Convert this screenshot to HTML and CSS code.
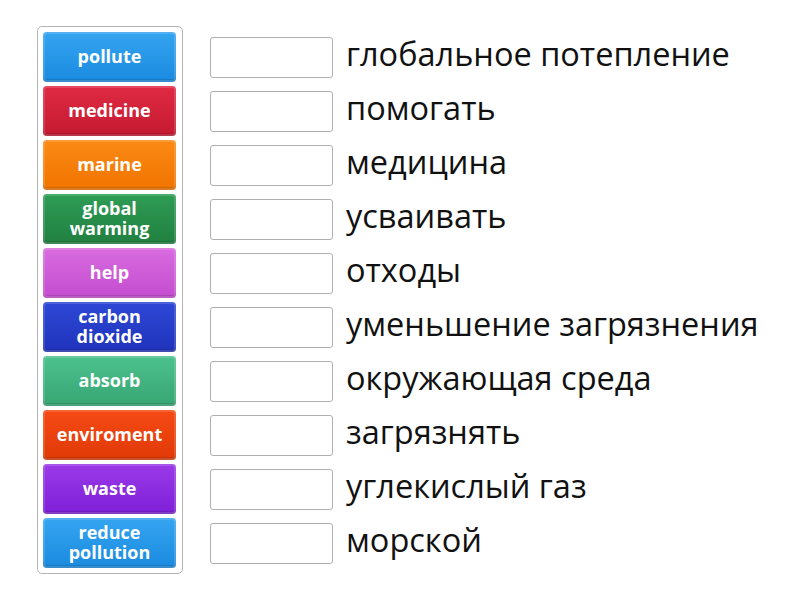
FILE: index.html
```html
<!DOCTYPE html>
<html>
<head>
<meta charset="utf-8">
<link rel="stylesheet" href="styles.css">
</head>
<body>
<div class="page">
  <div class="panel">
    <div class="tile c-blue">pollute</div>
    <div class="tile c-red">medicine</div>
    <div class="tile c-orange">marine</div>
    <div class="tile c-green two">global warming</div>
    <div class="tile c-pink">help</div>
    <div class="tile c-navy two">carbon dioxide</div>
    <div class="tile c-teal">absorb</div>
    <div class="tile c-flame">enviroment</div>
    <div class="tile c-purple">waste</div>
    <div class="tile c-blue two">reduce pollution</div>
  </div>
  <div class="rows">
    <div class="row"><div class="slot"></div><span class="label">глобальное потепление</span></div>
    <div class="row"><div class="slot"></div><span class="label">помогать</span></div>
    <div class="row"><div class="slot"></div><span class="label">медицина</span></div>
    <div class="row"><div class="slot"></div><span class="label">усваивать</span></div>
    <div class="row"><div class="slot"></div><span class="label">отходы</span></div>
    <div class="row"><div class="slot"></div><span class="label">уменьшение загрязнения</span></div>
    <div class="row"><div class="slot"></div><span class="label">окружающая среда</span></div>
    <div class="row"><div class="slot"></div><span class="label">загрязнять</span></div>
    <div class="row"><div class="slot"></div><span class="label">углекислый газ</span></div>
    <div class="row"><div class="slot"></div><span class="label">морской</span></div>
  </div>
</div>
</body>
</html>
```
FILE: styles.css
```css
html, body {
  margin: 0;
  padding: 0;
  background: #fff;
  font-family: "Open Sans", "Noto Sans", sans-serif;
}
.page {
  display: flex;
  align-items: flex-start;
  padding: 26px 0 0 37px;
}
.panel {
  box-sizing: border-box;
  width: 146px;
  border: 1px solid #b4b4b4;
  border-radius: 5px;
  padding: 5px 6px 5px 5px;
  display: flex;
  flex-direction: column;
  gap: 4px;
}
.tile {
  height: 50px;
  box-sizing: border-box;
  border-radius: 4px;
  display: flex;
  align-items: center;
  justify-content: center;
  text-align: center;
  color: #fff;
  font-weight: 700;
  font-size: 18px;
  line-height: 20px;
  padding: 0 6px 2px;
  box-shadow: inset 0 0 0 2px rgba(255,255,255,0.15), inset 0 -3px 0 rgba(0,0,0,0.12);
}
.c-blue { background: linear-gradient(#35a4f0, #1a8ae0); }
.c-red { background: linear-gradient(#e02a44, #c41a30); }
.c-orange { background: linear-gradient(#fb8a14, #f07400); }
.c-green { background: linear-gradient(#2f9d55, #207f40); }
.c-pink { background: linear-gradient(#d86ce0, #c44ccf); }
.c-navy { background: linear-gradient(#2e48d6, #1f33bb); }
.c-teal { background: linear-gradient(#4cc18e, #37a673); }
.c-flame { background: linear-gradient(#f54a14, #e03a08); }
.c-purple { background: linear-gradient(#9a3ae8, #7e1fd8); }
.rows {
  margin-left: 27px;
  padding-top: 6px;
  display: flex;
  flex-direction: column;
  gap: 4px;
}
.row {
  height: 50px;
  display: flex;
  align-items: center;
}
.slot {
  box-sizing: border-box;
  width: 123px;
  height: 41px;
  border: 1px solid #b0b0b0;
  border-radius: 3px;
  background: #fff;
}
.label {
  margin-left: 13px;
  font-size: 32.5px;
  line-height: 40px;
  padding-bottom: 6px;
  color: #111;
  white-space: nowrap;
}
```
